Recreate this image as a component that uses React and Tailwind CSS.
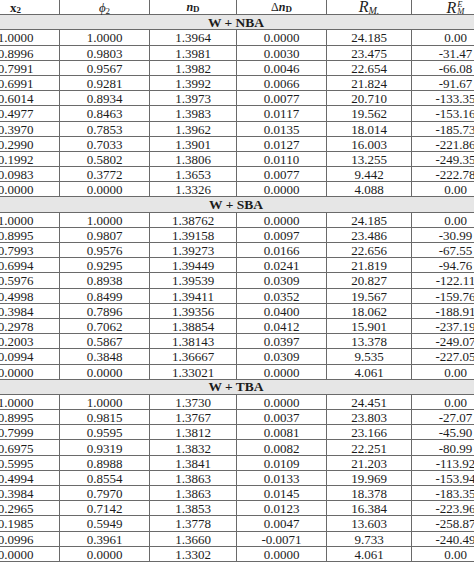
import React from "react";

const sections = [
  {
    title: "W + NBA",
    rows: [
      ["1.0000", "1.0000", "1.3964", "0.0000", "24.185", "0.00"],
      ["0.8996", "0.9803", "1.3981", "0.0030", "23.475", "-31.47"],
      ["0.7991", "0.9567", "1.3982", "0.0046", "22.654", "-66.08"],
      ["0.6991", "0.9281", "1.3992", "0.0066", "21.824", "-91.67"],
      ["0.6014", "0.8934", "1.3973", "0.0077", "20.710", "-133.35"],
      ["0.4977", "0.8463", "1.3983", "0.0117", "19.562", "-153.16"],
      ["0.3970", "0.7853", "1.3962", "0.0135", "18.014", "-185.73"],
      ["0.2990", "0.7033", "1.3901", "0.0127", "16.003", "-221.86"],
      ["0.1992", "0.5802", "1.3806", "0.0110", "13.255", "-249.35"],
      ["0.0983", "0.3772", "1.3653", "0.0077", "9.442", "-222.78"],
      ["0.0000", "0.0000", "1.3326", "0.0000", "4.088", "0.00"],
    ],
  },
  {
    title: "W + SBA",
    rows: [
      ["1.0000", "1.0000", "1.38762", "0.0000", "24.185", "0.00"],
      ["0.8995", "0.9807", "1.39158", "0.0097", "23.486", "-30.99"],
      ["0.7993", "0.9576", "1.39273", "0.0166", "22.656", "-67.55"],
      ["0.6994", "0.9295", "1.39449", "0.0241", "21.819", "-94.76"],
      ["0.5976", "0.8938", "1.39539", "0.0309", "20.827", "-122.11"],
      ["0.4998", "0.8499", "1.39411", "0.0352", "19.567", "-159.76"],
      ["0.3984", "0.7896", "1.39356", "0.0400", "18.062", "-188.91"],
      ["0.2978", "0.7062", "1.38854", "0.0412", "15.901", "-237.19"],
      ["0.2003", "0.5867", "1.38143", "0.0397", "13.378", "-249.07"],
      ["0.0994", "0.3848", "1.36667", "0.0309", "9.535", "-227.05"],
      ["0.0000", "0.0000", "1.33021", "0.0000", "4.061", "0.00"],
    ],
  },
  {
    title: "W + TBA",
    rows: [
      ["1.0000", "1.0000", "1.3730", "0.0000", "24.451", "0.00"],
      ["0.8995", "0.9815", "1.3767", "0.0037", "23.803", "-27.07"],
      ["0.7999", "0.9595", "1.3812", "0.0081", "23.166", "-45.90"],
      ["0.6975", "0.9319", "1.3832", "0.0082", "22.251", "-80.99"],
      ["0.5995", "0.8988", "1.3841", "0.0109", "21.203", "-113.92"],
      ["0.4994", "0.8554", "1.3863", "0.0133", "19.969", "-153.94"],
      ["0.3984", "0.7970", "1.3863", "0.0145", "18.378", "-183.35"],
      ["0.2965", "0.7142", "1.3853", "0.0123", "16.384", "-223.96"],
      ["0.1985", "0.5949", "1.3778", "0.0047", "13.603", "-258.87"],
      ["0.0996", "0.3961", "1.3660", "-0.0071", "9.733", "-240.49"],
      ["0.0000", "0.0000", "1.3302", "0.0000", "4.061", "0.00"],
    ],
  },
];

const cell =
  "flex items-center justify-center border-b border-r border-[#6a6a6a] whitespace-nowrap leading-none";

function Header() {
  return (
    <>
      <div className={cell}>
        <span className="font-bold text-[13px]">
          x<span className="text-[9px] relative top-[1px]">2</span>
        </span>
      </div>
      <div className={cell}>
        <span className="italic text-[13px]">
          ϕ<span className="text-[9px] not-italic relative top-[2px]">2</span>
        </span>
      </div>
      <div className={cell}>
        <span className="font-bold text-[12px]">
          <span className="italic">n</span>
          <span className="text-[9px] relative top-[1px]">D</span>
        </span>
      </div>
      <div className={cell}>
        <span className="text-[12px]">
          Δ<span className="italic font-bold">n</span>
          <span className="text-[9px] font-bold relative top-[1px]">D</span>
        </span>
      </div>
      <div className={cell}>
        <span className="italic text-[16px] leading-[14px] inline-flex items-end">
          R<span className="text-[10px] leading-[10px] mb-[-2px]">M.</span>
        </span>
      </div>
      <div className={cell}>
        <span className="italic text-[16px] leading-[14px] inline-flex items-center pt-[2px]">
          R
          <span className="inline-flex flex-col text-[8.5px] leading-[7px] ml-[1px]">
            <span>E</span>
            <span>M</span>
          </span>
        </span>
      </div>
    </>
  );
}

export default function App() {
  return (
    <div
      className="w-[474px] h-[562px] overflow-hidden bg-white text-[#1c1c1c]"
      style={{ fontFamily: '"Liberation Serif", "Times New Roman", serif' }}
    >
      <div className="ml-[-28px] w-[528px] grid grid-cols-[88px_90px_87px_90px_85px_88px] auto-rows-[15.19px] text-[13px]">
        <Header />
        {sections.map((s) => (
          <React.Fragment key={s.title}>
            <div className="col-span-6 flex items-center justify-center bg-[#e6e6e6] border-b border-[#6a6a6a] font-bold text-[13.5px] leading-none">
              {s.title}
            </div>
            {s.rows.map((r, i) =>
              r.map((v, j) => (
                <div key={`${s.title}-${i}-${j}`} className={`${cell} pt-[1px]`}>
                  {v}
                </div>
              ))
            )}
          </React.Fragment>
        ))}
      </div>
    </div>
  );
}
